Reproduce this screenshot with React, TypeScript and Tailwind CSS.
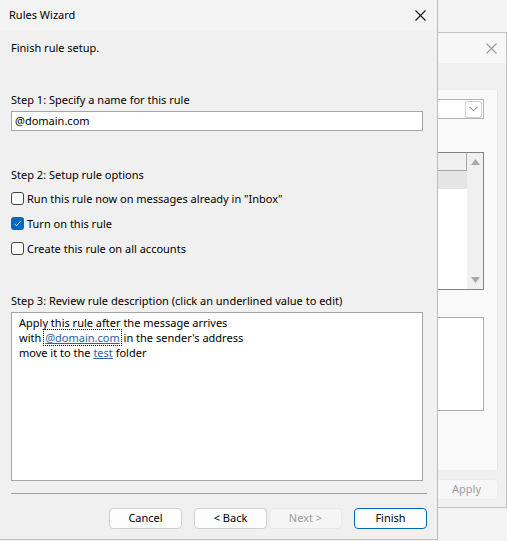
import React from "react";

const font = { fontFamily: '"Noto Sans", "Open Sans", sans-serif' };

const CloseIcon = ({ color }: { color: string }) => (
  <svg width="11" height="11" viewBox="0 0 11 11">
    <path d="M0.5 0.5 L10.5 10.5 M10.5 0.5 L0.5 10.5" stroke={color} strokeWidth="1.1" />
  </svg>
);

const Checkbox = ({ checked, label }: { checked?: boolean; label: string }) => (
  <div className="flex h-[25px] items-center">
    {checked ? (
      <div className="flex h-[13px] w-[13px] items-center justify-center rounded-[3px] bg-[#0067c0]">
        <svg width="9" height="9" viewBox="0 0 9 9">
          <path d="M1.5 4.8 L3.5 6.8 L7.5 2.2" stroke="white" strokeWidth="0.9" fill="none" />
        </svg>
      </div>
    ) : (
      <div className="h-[13px] w-[13px] rounded-[3px] border border-[#444] bg-white" />
    )}
    <span className="ml-[3px] text-[11px] leading-4 text-black">{label}</span>
  </div>
);

const Button = ({
  label,
  variant,
  className = "",
}: {
  label: string;
  variant?: "primary" | "disabled";
  className?: string;
}) => {
  const styles =
    variant === "primary"
      ? "border-[#0067c0] bg-[#fdfdfd] text-black"
      : variant === "disabled"
        ? "border-[#e8e8e8] bg-[#f5f5f5] text-[#9d9d9d]"
        : "border-[#d0d0d0] bg-[#fdfdfd] text-black";
  return (
    <div
      className={`flex h-[21px] w-[73px] items-center justify-center rounded-[4px] border text-[11px] ${styles} ${className}`}
    >
      {label}
    </div>
  );
};

const BackgroundWindow = () => (
  <div className="absolute left-[300px] top-[32px] flex h-[476px] w-[207px] flex-col border border-[#c4c4c4] bg-[#f0f0f0]">
    <div className="flex h-[30px] shrink-0 items-center justify-end bg-[#f7f7f7] pr-[9px]">
      <CloseIcon color="#9a9a9a" />
    </div>
    <div className="mt-[27px] ml-[10px] mr-[8px] flex h-[380px] flex-col border-r border-[#e6e6e6] bg-[#f9f9f9]">
      <div className="mt-[9px] ml-[10px] mr-[13px] flex h-[20px] items-center justify-end border border-[#b4b4b4] bg-white pr-[1px]">
        <div className="flex h-[17px] w-[17px] items-center justify-center rounded-[2px] border border-[#cfcfcf]">
          <svg width="9" height="6" viewBox="0 0 9 6">
            <path d="M0.5 0.8 L4.5 4.8 L8.5 0.8" stroke="#777" strokeWidth="1" fill="none" />
          </svg>
        </div>
      </div>
      <div className="mt-[33px] ml-[10px] mr-[13px] flex h-[138px] border border-[#828282] bg-white">
        <div className="flex flex-1 flex-col">
          <div className="h-[18px] border-r border-b border-[#a8a8a8] bg-[#f0f0f0]" />
          <div className="h-[18px] bg-[#e5e5e5]" />
        </div>
        <div className="flex w-[16px] flex-col items-center justify-between bg-[#f0f0f0] py-[6px]">
          <svg width="9" height="6" viewBox="0 0 9 6">
            <path d="M0 6 L4.5 0 L9 6 Z" fill="#a8a8a8" />
          </svg>
          <svg width="9" height="6" viewBox="0 0 9 6">
            <path d="M0 0 L4.5 6 L9 0 Z" fill="#a8a8a8" />
          </svg>
        </div>
      </div>
      <div className="mt-[27px] ml-[10px] mr-[13px] h-[94px] border border-[#acacac] bg-white" />
    </div>
    <div className="mt-[9px] mr-[8px] flex justify-end">
      <div className="flex h-[21px] w-[63px] items-center justify-center rounded-[4px] border border-[#ececec] bg-[#f7f7f7] text-[11px] text-[#9d9d9d]">
        Apply
      </div>
    </div>
  </div>
);

export default function App() {
  return (
    <div className="relative h-[541px] w-[507px] overflow-hidden bg-[#f3f3f3]" style={font}>
      <BackgroundWindow />
      <div className="absolute left-0 top-0 flex h-[540px] w-[438px] flex-col border-r border-b border-[#bcbcbc] bg-[#f0f0f0]">
        <div className="flex h-[31px] shrink-0 items-center justify-between bg-[#f3f3f3] pl-[9px] pr-[11px]">
          <span className="text-[11px] text-black">Rules Wizard</span>
          <CloseIcon color="#111" />
        </div>
        <div className="flex flex-col px-[11px]">
          <div className="mt-[9px] text-[11px] leading-4 text-black">Finish rule setup.</div>

          <div className="mt-[36px] text-[11px] leading-4 text-black">Step 1: Specify a name for this rule</div>
          <div className="mt-[3px] flex h-[20px] w-[412px] items-center border border-[#a5a5a5] bg-white pl-[3px] text-[11px] text-black">
            @domain.com
          </div>

          <div className="mt-[36px] text-[11px] leading-4 text-black">Step 2: Setup rule options</div>
          <div className="mt-[3px] flex flex-col">
            <Checkbox label={'Run this rule now on messages already in "Inbox"'} />
            <Checkbox checked label="Turn on this rule" />
            <Checkbox label="Create this rule on all accounts" />
          </div>

          <div className="mt-[32px] text-[11px] leading-4 text-black">
            Step 3: Review rule description (click an underlined value to edit)
          </div>
          <div className="mt-[3px] h-[169px] w-[412px] border border-[#a5a5a5] bg-white pl-[7px] pt-[2px] text-[11px] leading-[15px] text-black">
            <div>Apply this rule after the message arrives</div>
            <div>
              with{" "}
              <span className="px-[1px] text-[#2f62a8] underline outline-1 outline-dotted outline-black">
                @domain.com
              </span>{" "}
              in the sender's address
            </div>
            <div>
              move it to the <span className="text-[#2f62a8] underline">test</span> folder
            </div>
          </div>

          <div className="mt-[12px] h-px w-[416px] bg-[#a0a0a0]" />

          <div className="mt-[14px] flex w-[416px] justify-end">
            <Button label="Cancel" />
            <Button label="< Back" className="ml-[12px]" />
            <Button label="Next >" variant="disabled" className="ml-[2px]" />
            <Button label="Finish" variant="primary" className="ml-[12px]" />
          </div>
        </div>
      </div>
    </div>
  );
}
